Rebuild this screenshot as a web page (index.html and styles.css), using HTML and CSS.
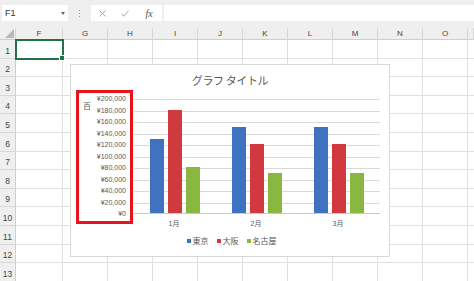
FILE: index.html
```html
<!DOCTYPE html>
<html lang="ja">
<head>
<meta charset="utf-8">
<link rel="stylesheet" href="styles.css">
</head>
<body>
<div class="app">
  <div class="toolbar">
    <div class="namebox"><span>F1</span><span class="dd"></span></div>
    <div class="grip"><i></i><i></i><i></i></div>
    <div class="fxbox">
      <span class="ico ico-x"><svg width="7" height="7" viewBox="0 0 7 7"><path d="M0.5 0.5L6.5 6.5M6.5 0.5L0.5 6.5" stroke="#a6a6a6" stroke-width="1" fill="none"/></svg></span>
      <span class="ico ico-ok"><svg width="8" height="7" viewBox="0 0 8 7"><path d="M0.5 3.8L2.8 6.2L7.5 0.6" stroke="#a6a6a6" stroke-width="1" fill="none"/></svg></span>
      <span class="ico ico-fx">fx</span>
    </div>
    <div class="formula"></div>
  </div>

  <div class="sheet">
    <div class="row head">
      <div class="rh corner"><span class="tri"></span></div>
      <div class="f">F</div><div>G</div><div>H</div><div>I</div><div>J</div><div>K</div><div>L</div><div>M</div><div>N</div><div>O</div><div class="p"></div>
    </div>
    <div class="row"><div class="rh">1</div><div class="f sel"></div><div></div><div></div><div></div><div></div><div></div><div></div><div></div><div></div><div></div><div class="p"></div></div>
    <div class="row"><div class="rh">2</div><div class="f"></div><div></div><div></div><div></div><div></div><div></div><div></div><div></div><div></div><div></div><div class="p"></div></div>
    <div class="row"><div class="rh">3</div><div class="f"></div><div></div><div></div><div></div><div></div><div></div><div></div><div></div><div></div><div></div><div class="p"></div></div>
    <div class="row"><div class="rh">4</div><div class="f"></div><div></div><div></div><div></div><div></div><div></div><div></div><div></div><div></div><div></div><div class="p"></div></div>
    <div class="row"><div class="rh">5</div><div class="f"></div><div></div><div></div><div></div><div></div><div></div><div></div><div></div><div></div><div></div><div class="p"></div></div>
    <div class="row"><div class="rh">6</div><div class="f"></div><div></div><div></div><div></div><div></div><div></div><div></div><div></div><div></div><div></div><div class="p"></div></div>
    <div class="row"><div class="rh">7</div><div class="f"></div><div></div><div></div><div></div><div></div><div></div><div></div><div></div><div></div><div></div><div class="p"></div></div>
    <div class="row"><div class="rh">8</div><div class="f"></div><div></div><div></div><div></div><div></div><div></div><div></div><div></div><div></div><div></div><div class="p"></div></div>
    <div class="row"><div class="rh">9</div><div class="f"></div><div></div><div></div><div></div><div></div><div></div><div></div><div></div><div></div><div></div><div class="p"></div></div>
    <div class="row"><div class="rh">10</div><div class="f"></div><div></div><div></div><div></div><div></div><div></div><div></div><div></div><div></div><div></div><div class="p"></div></div>
    <div class="row"><div class="rh">11</div><div class="f"></div><div></div><div></div><div></div><div></div><div></div><div></div><div></div><div></div><div></div><div class="p"></div></div>
    <div class="row"><div class="rh">12</div><div class="f"></div><div></div><div></div><div></div><div></div><div></div><div></div><div></div><div></div><div></div><div class="p"></div></div>
    <div class="row"><div class="rh">13</div><div class="f"></div><div></div><div></div><div></div><div></div><div></div><div></div><div></div><div></div><div></div><div class="p"></div></div>
  </div>

  <div class="chart">
    <div class="title">グラフ タイトル</div>
    <div class="body">
      <div class="axis">
        <div class="unit">百</div>
        <div class="ticks">
          <span>¥200,000</span><span>¥180,000</span><span>¥160,000</span><span>¥140,000</span><span>¥120,000</span><span>¥100,000</span><span>¥80,000</span><span>¥60,000</span><span>¥40,000</span><span>¥20,000</span><span>¥0</span>
        </div>
      </div>
      <div class="plot">
        <div class="grid">
          <div class="group">
            <div class="bar tokyo" style="height:65%"></div>
            <div class="bar osaka" style="height:90%"></div>
            <div class="bar nagoya" style="height:40%"></div>
          </div>
          <div class="group">
            <div class="bar tokyo" style="height:75%"></div>
            <div class="bar osaka" style="height:60%"></div>
            <div class="bar nagoya" style="height:35%"></div>
          </div>
          <div class="group">
            <div class="bar tokyo" style="height:75%"></div>
            <div class="bar osaka" style="height:60%"></div>
            <div class="bar nagoya" style="height:35%"></div>
          </div>
        </div>
        <div class="cats"><span>1月</span><span>2月</span><span>3月</span></div>
      </div>
    </div>
    <div class="legend">
      <span class="item"><i class="sw tokyo"></i>東京</span>
      <span class="item"><i class="sw osaka"></i>大阪</span>
      <span class="item"><i class="sw nagoya"></i>名古屋</span>
    </div>
  </div>
</div>
</body>
</html>
```

FILE: styles.css
```css
* { box-sizing: border-box; margin: 0; padding: 0; }
html, body { width: 474px; height: 281px; overflow: hidden; background: #fff; }
body { font-family: "Liberation Sans", "Noto Sans CJK JP", sans-serif; color: #444; }

.app { position: relative; width: 474px; height: 281px; overflow: hidden; }

/* formula bar */
.toolbar { display: flex; align-items: flex-start; height: 28px; padding-top: 5px; background: #efefef; }
.namebox { margin-left: 2px; width: 66px; height: 16px; background: #fff; display: flex; align-items: center; justify-content: space-between; padding: 0 3px 0 3px; font-size: 9px; color: #333; }
.dd { width: 0; height: 0; border-left: 2.5px solid transparent; border-right: 2.5px solid transparent; border-top: 3px solid #666; }
.grip { margin-left: 11px; margin-top: 5px; width: 1px; display: flex; flex-direction: column; gap: 2px; }
.grip i { display: block; width: 1px; height: 1px; background: #9a9a9a; }
.fxbox { margin-left: 11px; width: 71px; height: 16px; background: #fff; display: flex; align-items: center; }
.ico { display: flex; justify-content: center; align-items: center; height: 16px; }
.ico-x { width: 22px; }
.ico-ok { width: 24px; }
.ico-fx { width: 24px; font-family: "Liberation Serif", serif; font-style: italic; font-size: 10px; color: #555; }
.formula { margin-left: 2px; flex: 1; height: 16px; background: #fff; }

/* sheet grid */
.sheet { display: flex; flex-direction: column; }
.row { display: flex; height: 18.6px; }
.row > div { flex: none; width: 45px; border-right: 1px solid #e0e0e0; border-bottom: 1px solid #e0e0e0; }
.row > .f { width: 47px; }
.row > .p { width: 6px; border-right: 0; }
.row > .rh { width: 16px; background: #efefef; border-right: 1px solid #cfcfcf; border-bottom: 1px solid #d8d8d8; display: flex; justify-content: center; align-items: flex-end; padding-bottom: 2px; font-size: 8.5px; color: #444; }
.row.head { height: 12px; }
.row.head > div { background: #efefef; border-right: 1px solid #d6d6d6; border-bottom: 1px solid #cfcfcf; display: flex; justify-content: center; align-items: center; font-size: 8px; color: #444; }
.row.head > .corner { position: relative; padding: 0; }
.tri { position: absolute; right: 1px; bottom: 1px; width: 0; height: 0; border-left: 9px solid transparent; border-bottom: 9px solid #b9b9b9; }

.sel { position: relative; outline: 2px solid #217346; outline-offset: -1px; }
.sel::after { content: ""; position: absolute; right: -3px; bottom: -3px; width: 4px; height: 4px; background: #217346; border: 1px solid #fff; }

/* chart */
.chart { position: absolute; left: 70px; top: 64px; width: 320px; height: 193px; background: #fff; border: 1px solid #d9d9d9; display: flex; flex-direction: column; }
.title { padding-top: 5px; height: 25px; line-height: 20px; text-align: center; font-family: "Noto Sans CJK JP", sans-serif; font-size: 11px; letter-spacing: -0.4px; color: #595959; }
.body { display: flex; align-items: flex-start; margin-left: 5px; }
.axis { width: 57px; height: 134px; border: 3px solid #e8141b; display: flex; padding-right: 4px; }
.unit { margin-left: 4px; margin-top: 8px; font-family: "Noto Sans CJK JP", sans-serif; font-size: 8px; line-height: 10px; color: #595959; }
.ticks { flex: 1; display: flex; flex-direction: column; align-items: flex-end; }
.ticks span { height: 11.55px; line-height: 11.55px; font-size: 7px; color: #595959; }

.plot { margin-left: 1px; width: 246px; padding-top: 8.5px; display: flex; flex-direction: column; }
.grid { height: 115.5px; display: flex; border-bottom: 1px solid #c8c8c8; background: repeating-linear-gradient(to bottom, #d9d9d9 0, #d9d9d9 1px, transparent 1px, transparent 11.55px); }
.group { flex: 1; display: flex; justify-content: center; align-items: flex-end; gap: 4px; }
.bar { width: 14px; }
.tokyo { background: #3f72c0; }
.osaka { background: #d0393e; }
.nagoya { background: #88b83f; }
.cats { display: flex; margin-top: 3px; height: 14px; }
.cats span { flex: 1; text-align: center; line-height: 14px; font-size: 7px; color: #595959; padding-right: 2px; }

.legend { display: flex; justify-content: center; gap: 8px; margin-top: 4px; padding-left: 3px; line-height: 12px; font-size: 8px; color: #595959; font-family: "Noto Sans CJK JP", sans-serif; }
.item { display: flex; align-items: center; gap: 2px; }
.sw { display: block; width: 4px; height: 4px; }
```
